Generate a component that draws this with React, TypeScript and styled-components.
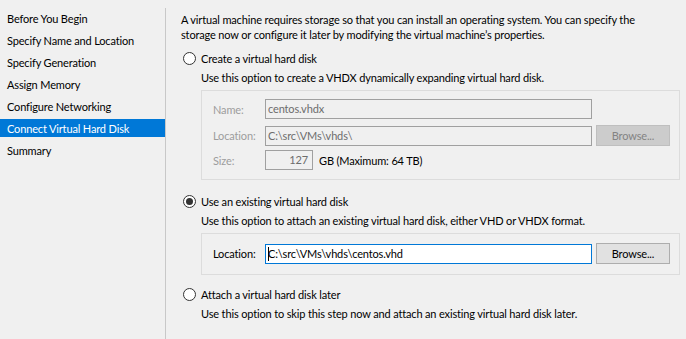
import React from 'react';
import styled, { createGlobalStyle } from 'styled-components';

const FONT = '"Lato", "Liberation Sans", sans-serif';
const FONT_SIZE = 11;
const TRACKING = '-0.15px';
const ACCENT = '#0078d7';
const PANEL_BG = '#f0f0f0';

const steps = [
    'Before You Begin',
    'Specify Name and Location',
    'Specify Generation',
    'Assign Memory',
    'Configure Networking',
    'Connect Virtual Hard Disk',
    'Summary',
];

const GlobalStyle = createGlobalStyle`
    html, body {
        margin: 0;
        padding: 0;
        background: ${PANEL_BG};
    }
    * {
        box-sizing: border-box;
    }
`;

function Radio({ checked, label }: { checked?: boolean; label: string }) {
    return (
        <RadioRow>
            <RadioCircle>{checked && <RadioDot />}</RadioCircle>
            <span>{label}</span>
        </RadioRow>
    );
}

export default function App() {
    return (
        <Window>
            <GlobalStyle />
            <Nav>
                {steps.map((step, i) => (
                    <NavItem key={step} $active={i === 5}>
                        {step}
                    </NavItem>
                ))}
            </Nav>
            <Pane>
                <Intro>
                    A virtual machine requires storage so that you can install an operating system. You can specify the
                    <br />
                    storage now or configure it later by modifying the virtual machine’s properties.
                </Intro>

                <Radio label="Create a virtual hard disk" />
                <Desc>Use this option to create a VHDX dynamically expanding virtual hard disk.</Desc>
                <Group $pt={8} $pb={9}>
                    <FieldRow>
                        <FieldLabel $disabled>Name:</FieldLabel>
                        <TextBox $disabled>centos.vhdx</TextBox>
                    </FieldRow>
                    <FieldRow $mt={6}>
                        <FieldLabel $disabled>Location:</FieldLabel>
                        <TextBox $disabled>C:\src\VMs\vhds\</TextBox>
                        <BrowseButton $disabled>Browse...</BrowseButton>
                    </FieldRow>
                    <FieldRow $mt={4}>
                        <FieldLabel $disabled>Size:</FieldLabel>
                        <SizeBox>127</SizeBox>
                        <SizeNote>GB (Maximum: 64 TB)</SizeNote>
                    </FieldRow>
                </Group>

                <Spacer $h={12} />
                <Radio checked label="Use an existing virtual hard disk" />
                <Desc>Use this option to attach an existing virtual hard disk, either VHD or VHDX format.</Desc>
                <Group $pt={9} $pb={10}>
                    <FieldRow>
                        <FieldLabel>Location:</FieldLabel>
                        <TextBox $focused>
                            <Caret />
                            C:\src\VMs\vhds\centos.vhd
                        </TextBox>
                        <BrowseButton>Browse...</BrowseButton>
                    </FieldRow>
                </Group>

                <Spacer $h={10} />
                <Radio label="Attach a virtual hard disk later" />
                <Desc>Use this option to skip this step now and attach an existing virtual hard disk later.</Desc>
            </Pane>
        </Window>
    );
}

const Window = styled.div`
    display: flex;
    width: 686px;
    height: 339px;
    overflow: hidden;
    background: ${PANEL_BG};
    font-family: ${FONT};
    font-size: ${FONT_SIZE}px;
    letter-spacing: ${TRACKING};
    color: #000;
`;

const Nav = styled.nav`
    width: 166px;
    flex-shrink: 0;
    margin-top: 8px;
    padding-top: 1px;
    border-right: 1px solid #c8c8c8;
    display: flex;
    flex-direction: column;
    gap: 4px;
`;

const NavItem = styled.div<{ $active?: boolean }>`
    height: 18px;
    line-height: 19px;
    padding-left: 7px;
    white-space: nowrap;
    background: ${(p) => (p.$active ? ACCENT : 'transparent')};
    color: ${(p) => (p.$active ? '#fff' : '#000')};
`;

const Pane = styled.main`
    flex: 1;
    padding: 12px 6px 0 15px;
    display: flex;
    flex-direction: column;
`;

const Intro = styled.p`
    margin: 0 0 7px;
    line-height: 15px;
    white-space: nowrap;
`;

const RadioRow = styled.div`
    display: flex;
    align-items: center;
    height: 18px;
    padding-left: 2px;
    gap: 5px;
    white-space: nowrap;
`;

const RadioCircle = styled.span`
    width: 13px;
    height: 13px;
    flex-shrink: 0;
    border: 1px solid #333;
    border-radius: 50%;
    background: #fff;
    display: flex;
    align-items: center;
    justify-content: center;
`;

const RadioDot = styled.span`
    width: 7px;
    height: 7px;
    border-radius: 50%;
    background: #333;
`;

const Desc = styled.div`
    margin: 3px 0 0 20px;
    line-height: 15px;
    white-space: nowrap;
`;

const Group = styled.section<{ $pt: number; $pb: number }>`
    margin: 5px 0 0 20px;
    width: 479px;
    border: 1px solid #dcdcdc;
    padding: ${(p) => p.$pt}px 9px ${(p) => p.$pb}px 11px;
    display: flex;
    flex-direction: column;
`;

const Spacer = styled.div<{ $h: number }>`
    height: ${(p) => p.$h}px;
    flex-shrink: 0;
`;

const FieldRow = styled.div<{ $mt?: number }>`
    display: flex;
    align-items: center;
    margin-top: ${(p) => p.$mt ?? 0}px;
    white-space: nowrap;
`;

const FieldLabel = styled.span<{ $disabled?: boolean }>`
    width: 52px;
    flex-shrink: 0;
    color: ${(p) => (p.$disabled ? '#9d9d9d' : '#000')};
`;

const TextBox = styled.div<{ $disabled?: boolean; $focused?: boolean }>`
    width: 327px;
    height: 20px;
    line-height: 18px;
    padding: 0 2px;
    display: flex;
    align-items: center;
    border: 1px solid ${(p) => (p.$focused ? ACCENT : p.$disabled ? '#a0a0a0' : '#7a7a7a')};
    background: ${(p) => (p.$disabled ? PANEL_BG : '#fff')};
    color: ${(p) => (p.$disabled ? '#6d6d6d' : '#000')};
`;

const Caret = styled.span`
    width: 1px;
    height: 14px;
    flex-shrink: 0;
    background: #000;
    margin-right: -1px;
`;

const SizeBox = styled.div`
    width: 48px;
    height: 20px;
    line-height: 18px;
    padding-right: 4px;
    text-align: right;
    border: 1px solid #a0a0a0;
    color: #6d6d6d;
`;

const SizeNote = styled.span`
    margin-left: 6px;
`;

const BrowseButton = styled.button<{ $disabled?: boolean }>`
    width: 74px;
    height: 21px;
    margin-left: 4px;
    padding: 0;
    font-family: ${FONT};
    font-size: ${FONT_SIZE}px;
    letter-spacing: ${TRACKING};
    border: 1px solid ${(p) => (p.$disabled ? '#bfbfbf' : '#adadad')};
    background: ${(p) => (p.$disabled ? '#cccccc' : '#e1e1e1')};
    color: ${(p) => (p.$disabled ? '#838383' : '#000')};
`;
